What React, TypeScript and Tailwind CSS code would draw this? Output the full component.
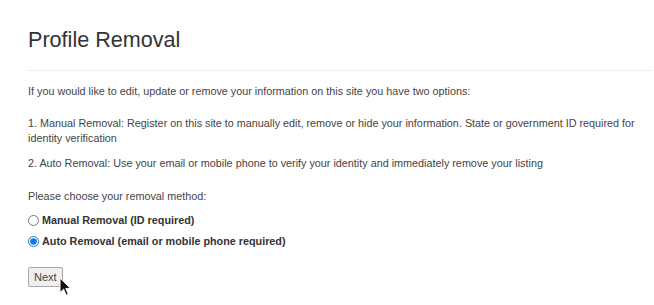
import { useState } from 'react'

type Method = 'manual' | 'auto'

const OPTIONS: { key: Method; label: string }[] = [
  { key: 'manual', label: 'Manual Removal (ID required)' },
  { key: 'auto', label: 'Auto Removal (email or mobile phone required)' },
]

function Cursor() {
  return (
    <svg width="13" height="20" viewBox="0 0 13 20" className="absolute left-[31px] top-[10px] pointer-events-none">
      <path
        d="M1 1 L1 15.5 L4.6 12.2 L7.2 18.2 L9.3 17.3 L6.8 11.4 L11.5 11.4 Z"
        fill="#111"
        stroke="#fff"
        strokeWidth="1"
        strokeLinejoin="round"
      />
    </svg>
  )
}

export default function App() {
  const [method, setMethod] = useState<Method>('auto')

  return (
    <div className="w-[654px] h-[305px] bg-white overflow-hidden font-['Liberation_Sans',Arial,sans-serif] text-[#444]">
      <div className="pl-[28px] pr-[1px] pt-[28px]">

        {/* Header */}
        <h3 className="text-[21.6px] leading-[24px] text-[#333] pb-[18px] border-b border-[#eee]">
          Profile Removal
        </h3>

        {/* Intro */}
        <div className="text-[10.8px] leading-[15px] pt-[13px]">
          <p className="mb-[17px]">
            If you would like to edit, update or remove your information on this site you have two options:
          </p>
          <p className="mb-[10px]">
            1. Manual Removal: Register on this site to manually edit, remove or hide your information. State or government ID required for identity verification
          </p>
          <p className="mb-[18px]">
            2. Auto Removal: Use your email or mobile phone to verify your identity and immediately remove your listing
          </p>
          <p className="mb-[9px]">Please choose your removal method:</p>

          {/* Options */}
          <div className="flex flex-col gap-[6px]">
            {OPTIONS.map(({ key, label }) => (
              <label key={key} className="flex items-center gap-[3px] font-bold text-[#333]">
                <input
                  type="radio"
                  name="method"
                  checked={method === key}
                  onChange={() => setMethod(key)}
                  className="w-[11px] h-[11px] m-0 accent-[#1a73e8]"
                />
                {label}
              </label>
            ))}
          </div>

          {/* Submit */}
          <div className="relative mt-[18px] w-fit">
            <button className="h-[20px] px-[5px] text-[11px] text-[#444] bg-[#efefef] border border-[#a9a9a9] rounded-[2px] leading-none">
              Next
            </button>
            <Cursor />
          </div>
        </div>
      </div>
    </div>
  )
}
